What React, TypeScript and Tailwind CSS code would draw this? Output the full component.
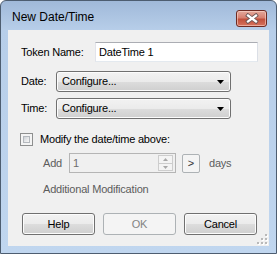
import React from "react";

function Combo({ text }: { text: string }) {
  return (
    <div className="ml-[35px] w-[175px] h-[21px] rounded-[3px] border border-[#707070] bg-[linear-gradient(to_bottom,#f2f2f2_0%,#ebebeb_50%,#dddddd_50%,#cfcfcf_100%)] shadow-[inset_0_0_0_1px_#fcfcfc] flex items-center justify-between pl-[5px] pr-[6px]">
      <span>{text}</span>
      <svg width="7" height="4" viewBox="0 0 7 4">
        <path d="M0 0H7L3.5 4Z" fill="#000" />
      </svg>
    </div>
  );
}

function Btn({ label, disabled }: { label: string; disabled?: boolean }) {
  return (
    <div
      className={
        disabled
          ? "w-[73px] h-[22px] rounded-[3px] border border-[#adb2b5] bg-[#f4f4f4] text-[#838383] flex items-center justify-center"
          : "w-[73px] h-[22px] rounded-[3px] border border-[#707070] bg-[linear-gradient(to_bottom,#f2f2f2_0%,#ebebeb_50%,#dddddd_50%,#cfcfcf_100%)] shadow-[inset_0_0_0_1px_#fcfcfc] flex items-center justify-center"
      }
    >
      {label}
    </div>
  );
}

export default function App() {
  return (
    <div className="w-[277px] h-[254px] font-['Liberation_Sans',Arial,sans-serif] text-[11px] tracking-[-0.2px] text-black">
      <div className="w-full h-full rounded-t-[6px] border border-[#4d5d70] bg-[linear-gradient(to_bottom,#a0b9d9_0px,#b7cee9_29px,#c0d6ef_100%)] flex flex-col px-[7px] pb-[7px]">
        {/* Title bar */}
        <div className="h-[29px] flex items-end justify-between pl-[4px] pr-[2px] pb-[3px] shrink-0">
          <span className="text-[12px] tracking-normal leading-none mb-[4px]">New Date/Time</span>
          <div className="w-[31px] h-[17px] rounded-[3px] border border-[#6e2b23] bg-[linear-gradient(to_bottom,#e3a99c_0%,#d88070_45%,#c0503c_55%,#d7735e_100%)] shadow-[inset_0_0_0_1px_rgba(255,220,210,0.55)] flex items-center justify-center">
            <svg width="14" height="11" viewBox="0 0 14 11">
              <path d="M3 2.5L11 8.5M11 2.5L3 8.5" stroke="#6b5555" strokeWidth="4" strokeLinecap="square" />
              <path d="M3 2.5L11 8.5M11 2.5L3 8.5" stroke="#ffffff" strokeWidth="2.2" strokeLinecap="square" />
            </svg>
          </div>
        </div>
        {/* Client */}
        <div className="relative flex-1 bg-[#f0f0f0] flex flex-col pl-[13px]">
          <div className="mt-[12px] flex items-center h-[20px]">
            <span className="w-[74px]">Token Name:</span>
            <div className="w-[163px] h-[20px] bg-white border border-[#abadb3] border-l-[#e2e3ea] border-r-[#dbdfe6] border-b-[#e3e9ef] flex items-center pl-[3px]">
              DateTime 1
            </div>
          </div>
          <div className="mt-[9px] flex items-center">
            <span className="w-0 whitespace-nowrap">Date:</span>
            <Combo text="Configure..." />
          </div>
          <div className="mt-[6px] flex items-center">
            <span className="w-0 whitespace-nowrap">Time:</span>
            <Combo text="Configure..." />
          </div>
          <div className="mt-[14px] flex items-center h-[13px] -ml-[1px]">
            <div className="w-[13px] h-[13px] border border-[#8e8f8f] bg-[#f4f4f4] p-[2px]">
              <div className="w-full h-full border border-[#b4b8bd] bg-[linear-gradient(135deg,#cdd1d6_0%,#e9eaeb_60%,#f7f7f7_100%)]" />
            </div>
            <span className="ml-[7px]">Modify the date/time above:</span>
          </div>
          <div className="mt-[7px] flex items-center h-[20px] pl-[22px] text-[#5c5c5c]">
            <span>Add</span>
            <div className="ml-[7px] w-[107px] h-[20px] border border-[#b5b5b5] bg-[#f0f0f0] flex items-center justify-between pl-[3px] pr-[2px] text-[#6d6d6d]">
              <span>1</span>
              <div className="flex flex-col gap-0">
                <div className="w-[15px] h-[8px] border border-[#cdcdcd] border-b-0 bg-[#f4f4f4] flex items-center justify-center">
                  <svg width="5" height="3" viewBox="0 0 5 3"><path d="M0 3H5L2.5 0Z" fill="#a8a8a8" /></svg>
                </div>
                <div className="w-[15px] h-[8px] border border-[#cdcdcd] bg-[#f4f4f4] flex items-center justify-center">
                  <svg width="5" height="3" viewBox="0 0 5 3"><path d="M0 0H5L2.5 3Z" fill="#a8a8a8" /></svg>
                </div>
              </div>
            </div>
            <div className="ml-[6px] w-[18px] h-[19px] rounded-[2px] border border-[#adb2b5] bg-[#f4f4f4] flex items-center justify-center text-[#333]">
              &gt;
            </div>
            <span className="ml-[9px]">days</span>
          </div>
          <div className="mt-[9px] pl-[22px] text-[#5c5c5c] leading-[14px]">Additional Modification</div>
          <div className="mt-[17px] flex gap-[8px] pl-[1px]">
            <Btn label="Help" />
            <Btn label="OK" disabled />
            <Btn label="Cancel" />
          </div>
          <svg className="absolute right-[1px] bottom-[1px]" width="11" height="11" viewBox="0 0 11 11">
            {[
              [8, 0],
              [4, 4],
              [8, 4],
              [0, 8],
              [4, 8],
              [8, 8],
            ].map(([x, y], i) => (
              <g key={i}>
                <rect x={x + 1} y={y + 1} width="2" height="2" fill="#ffffff" />
                <rect x={x} y={y} width="2" height="2" fill="#b9b9b9" />
              </g>
            ))}
          </svg>
        </div>
      </div>
    </div>
  );
}
